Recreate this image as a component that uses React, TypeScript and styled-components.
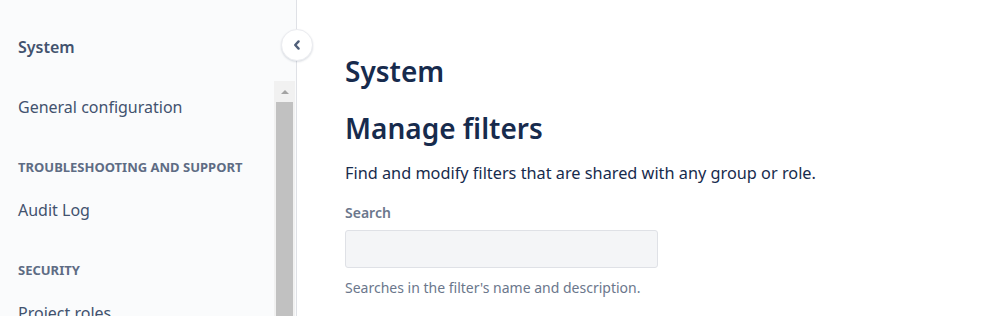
import { type FC } from "react";
import { createGlobalStyle, styled } from "styled-components";

const GlobalStyle = createGlobalStyle`
  html, body {
    margin: 0;
    overflow: hidden;
  }
  body {
    font-family: "Noto Sans", "Open Sans", sans-serif;
    color: #172b4d;
    background: #fff;
  }
`;

const Page = styled.div`
  display: flex;
  height: 100vh;
`;

const Sidebar = styled.aside`
  position: relative;
  flex: 0 0 296px;
  display: flex;
  flex-direction: column;
  background: #fafbfc;
  border-right: 1px solid #dfe1e6;
`;

const SidebarTitle = styled.div`
  flex: 0 0 81px;
  padding: 37px 0 0 18px;
  box-sizing: border-box;
  font-size: 16px;
  line-height: 20px;
  font-weight: 600;
  color: #42526e;
`;

const SidebarBody = styled.div`
  flex: 1;
  min-height: 0;
  display: flex;
`;

const NavList = styled.nav`
  flex: 1;
  padding-top: 6px;
  overflow: hidden;
`;

// the browser draws no scrollbar here, so the list's bar is drawn by hand
const ScrollTrack = styled.div`
  flex: 0 0 21px;
  margin-right: 1px;
  display: flex;
  flex-direction: column;
  background: #f1f1f1;
`;

const ScrollArrow = styled.div`
  flex: 0 0 21px;
  display: flex;
  align-items: center;
  justify-content: center;

  &::before {
    content: "";
    width: 0;
    height: 0;
    border-left: 4.5px solid transparent;
    border-right: 4.5px solid transparent;
    border-bottom: 4px solid #a3a3a3;
  }
`;

const ScrollThumb = styled.div`
  flex: 1;
  margin: 0 2px;
  background: #c1c1c1;
`;

const NavItem = styled.a`
  display: flex;
  align-items: center;
  height: 40px;
  padding-left: 18px;
  font-size: 16px;
  color: #42526e;
  text-decoration: none;
  white-space: nowrap;
`;

const SectionTitle = styled.div`
  margin: 32px 0 15px;
  padding-left: 18px;
  font-size: 13px;
  line-height: 16px;
  font-weight: 700;
  text-transform: uppercase;
  color: #5e6c84;
  white-space: nowrap;
`;

const CollapseButton = styled.button`
  position: absolute;
  top: 29px;
  right: -17px;
  width: 32px;
  height: 32px;
  padding: 0;
  border-radius: 50%;
  border: 1px solid #ebecf0;
  background: #fff;
  box-shadow: 0 1px 2px rgba(9, 30, 66, 0.14);
  display: flex;
  align-items: center;
  justify-content: center;
  color: #505f79;
  cursor: pointer;
`;

const Main = styled.main`
  flex: 1;
  padding: 55px 48px 0;
`;

const PageTitle = styled.h1`
  margin: 0;
  font-size: 28px;
  line-height: 32px;
  font-weight: 600;
`;

const SectionHeading = styled.h2`
  margin: 25px 0 0;
  font-size: 28px;
  line-height: 32px;
  font-weight: 600;
`;

const Description = styled.p`
  margin: 17px 0 0;
  font-size: 16.3px;
  line-height: 24px;
`;

const Field = styled.div`
  margin-top: 18px;
  display: flex;
  flex-direction: column;
`;

const Label = styled.label`
  font-size: 14px;
  line-height: 20px;
  font-weight: 600;
  color: #6b778c;
`;

const SearchInput = styled.input`
  margin-top: 7px;
  width: 313px;
  height: 38px;
  box-sizing: border-box;
  border: 1px solid #dfe1e6;
  border-radius: 3px;
  background: #f4f5f7;
  font: inherit;
`;

const Helper = styled.div`
  margin-top: 10px;
  font-size: 14px;
  line-height: 20px;
  color: #6b778c;
`;

const sections: { title?: string; items: string[] }[] = [
  { items: ["General configuration"] },
  { title: "Troubleshooting and support", items: ["Audit Log"] },
  { title: "Security", items: ["Project roles", "Global permissions"] },
];

const App: FC = () => (
  <Page>
    <GlobalStyle />
    <Sidebar>
      <SidebarTitle>System</SidebarTitle>
      <SidebarBody>
        <NavList>
          {sections.map((section, i) => (
            <div key={i}>
              {section.title && <SectionTitle>{section.title}</SectionTitle>}
              {section.items.map((item) => (
                <NavItem key={item} href="#">{item}</NavItem>
              ))}
            </div>
          ))}
        </NavList>
        <ScrollTrack>
          <ScrollArrow />
          <ScrollThumb />
        </ScrollTrack>
      </SidebarBody>
      <CollapseButton aria-label="Collapse sidebar">
        <svg width="12" height="12" viewBox="0 0 12 12">
          <path d="M7.6 2.4 L4.2 6 L7.6 9.6" fill="none" stroke="currentColor" strokeWidth="2.4" strokeLinecap="round" strokeLinejoin="round" />
        </svg>
      </CollapseButton>
    </Sidebar>
    <Main>
      <PageTitle>System</PageTitle>
      <SectionHeading>Manage filters</SectionHeading>
      <Description>Find and modify filters that are shared with any group or role.</Description>
      <Field>
        <Label htmlFor="search">Search</Label>
        <SearchInput id="search" />
        <Helper>Searches in the filter's name and description.</Helper>
      </Field>
    </Main>
  </Page>
);

export default App;
